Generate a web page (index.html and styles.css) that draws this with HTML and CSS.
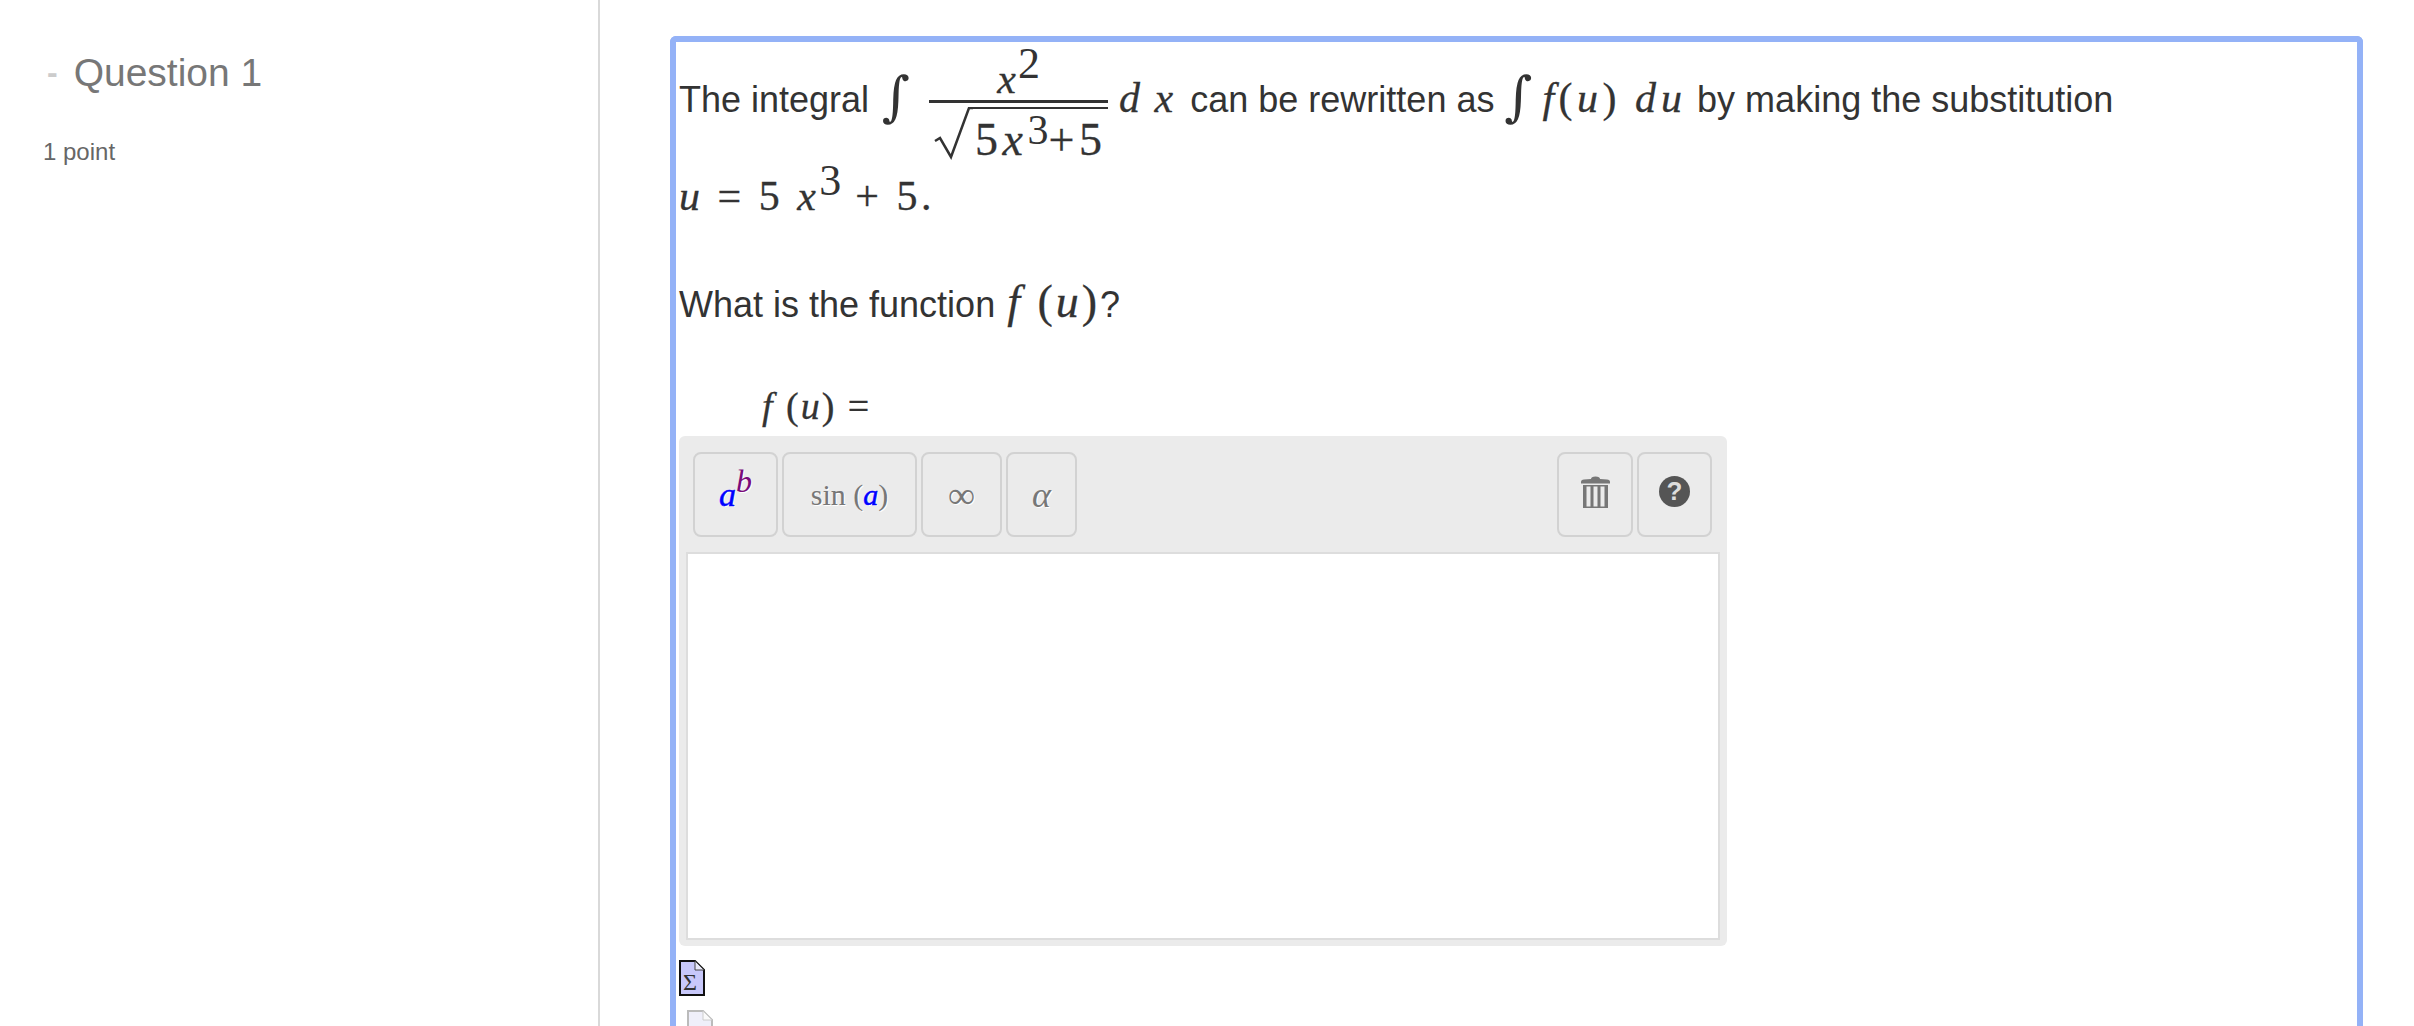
FILE: index.html
```html
<!DOCTYPE html>
<html lang="en">
<head>
    <meta charset="UTF-8">
    <title>Question 1</title>
    <link rel="stylesheet" href="styles.css">
</head>
<body>
    <div class="page">
        <!-- Left column -->
        <aside class="sidebar">
            <h2 class="q-title"><span class="q-dash">-</span>Question 1</h2>
            <div class="q-points">1 point</div>
        </aside>

        <!-- Question -->
        <main class="main">
            <div class="q-box">
                <p class="line-one">
                    The integral<span class="int">∫</span><span class="frac">
                        <span class="frac-top"><i class="math">x</i><sup class="sup-num">2</sup></span>
                        <span class="frac-bot">
                            <svg class="radical" width="39" height="54" viewBox="0 0 39 54"><path d="M1 34 L6 31 L17 50 L35 1 H39" fill="none" stroke="#333" stroke-width="2.500"/></svg>
                            <span class="radicand"><span class="math">5<i>x</i></span><sup class="sup-small">3</sup><span class="math">+5</span></span>
                        </span>
                    </span><i class="math dx">d x</i><span class="after-dx">can be rewritten as</span><span class="int int-two">∫</span><span class="math fu"><i>f</i>(<i>u</i>)</span><i class="math du">du</i><span class="after-du">by making the substitution</span>
                </p>
                <p class="line-two"><span class="math"><i>u</i> = 5 <i>x</i></span><sup class="sup-num">3</sup><span class="math"> + 5.</span></p>
                <p class="line-three">What is the function<span class="math fn-call"><i>f</i> (<i>u</i>)</span>?</p>
                <div class="answer-label math"><i>f</i> (<i>u</i>) =</div>

                <div class="editor">
                    <div class="toolbar">
                        <button class="tool tool-pow"><span><i class="var-a">a</i><sup class="var-b">b</sup></span></button>
                        <button class="tool tool-sin"><span>sin (<i class="var-a">a</i>)</span></button>
                        <button class="tool tool-inf">∞</button>
                        <button class="tool tool-alpha">α</button>
                        <div class="tool-gap"></div>
                        <button class="tool tool-icon">
                            <svg class="icon-up" width="29" height="32" viewBox="0 0 29 32">
                                <path d="M0 6 Q0 3.500 3 3.500 L10 3 Q10 0.500 14.500 0.500 Q19 0.500 19 3 L26 3.500 Q29 3.500 29 6 L29 7.500 L0 7.500 Z" fill="#777"/>
                                <path d="M2 9 H27 V32 H2 Z M5.500 10.500 V30.500 H9.500 V10.500 Z M12.500 10.500 V30.500 H16.500 V10.500 Z M19.500 10.500 V30.500 H23.500 V10.500 Z" fill="#777" fill-rule="evenodd"/>
                            </svg>
                        </button>
                        <button class="tool tool-help">
                            <span class="help icon-up">?</span>
                        </button>
                    </div>
                    <div class="input-area"></div>
                </div>

                <div class="file-icon">
                    <svg width="26" height="36" viewBox="0 0 26 36">
                        <path d="M1 1 H16 L25 10 V35 H1 Z" fill="#c8c8fa" stroke="#111" stroke-width="2"/>
                        <path d="M16 1 V10 H25 Z" fill="#e8e8f8" stroke="#444" stroke-width="1"/>
                        <text x="11" y="30" text-anchor="middle" class="sigma">Σ</text>
                    </svg>
                </div>
                <div class="file-icon file-icon-off">
                    <svg width="26" height="36" viewBox="0 0 26 36">
                        <path d="M1 1 H16 L25 10 V35 H1 Z" fill="#efeffa" stroke="#bbb" stroke-width="2"/>
                        <path d="M16 1 V10 H25 Z" fill="#fafafa" stroke="#ccc" stroke-width="1"/>
                    </svg>
                </div>
            </div>
        </main>
    </div>
</body>
</html>
```

FILE: styles.css
```css
html, body {
    margin: 0;
    height: 100%;
    overflow: hidden;
    background: #fff;
}

body {
    font-family: "Liberation Sans", Arial, sans-serif;
    color: #333;
}

.page {
    display: flex;
    height: 1026px;
    overflow: hidden;
}

.sidebar {
    width: 600px;
    flex: none;
    box-sizing: border-box;
    border-right: 2px solid #d9d9d9;
    padding: 48px 0 0 43px;
}

.q-title {
    margin: 0;
    font-size: 39px;
    font-weight: normal;
    line-height: 48px;
    color: #777;
}

.q-dash {
    color: #ccc;
    font-size: 32px;
    font-weight: bold;
    vertical-align: 3px;
    margin: 0 16px 0 4px;
}

.q-points {
    margin-top: 40px;
    font-size: 24px;
    line-height: 30px;
    color: #666;
}

.main {
    flex: 1;
    padding: 36px 51px 0 70px;
}

.q-box {
    border: 6px solid #94b2f7;
    border-bottom: none;
    border-radius: 6px 6px 0 0;
    padding-left: 3px;
    height: 1200px;
    font-size: 36px;
}

.q-box p {
    margin: 0;
}

.math {
    font-family: "Liberation Serif", "DejaVu Serif", serif;
    font-size: 42px;
    letter-spacing: 2px;
    -webkit-text-stroke: 0.3px #333;
}

.line-one {
    height: 126px;
    white-space: nowrap;
}

.int {
    display: inline-block;
    width: 27px;
    margin: 0 20px 0 13px;
    font-family: "DejaVu Serif", serif;
    font-size: 54px;
    line-height: 0;
    vertical-align: -3px;
}

.frac {
    display: inline-flex;
    flex-direction: column;
    width: 179px;
    vertical-align: 19px;
    line-height: 1;
}

.frac-top {
    height: 58px;
    line-height: 74px;
    text-align: center;
    border-bottom: 3px solid #333;
}

.frac-bot {
    display: flex;
    justify-content: flex-end;
    margin-top: 4px;
}

.radical {
    flex: none;
}

.radicand {
    width: 135px;
    box-sizing: border-box;
    border-top: 2.5px solid #333;
    height: 52px;
    line-height: 62px;
    white-space: nowrap;
    padding-left: 2px;
}

.radicand .math {
    font-size: 46px;
    letter-spacing: 4.500px;
}

.sup-num {
    font-family: "Liberation Serif", serif;
    font-size: 44px;
    line-height: 0;
    vertical-align: 15px;
}

.sup-small {
    font-family: "Liberation Serif", serif;
    font-size: 42px;
    line-height: 0;
    vertical-align: 11px;
}

.dx {
    margin-left: 11px;
}

.after-dx {
    margin-left: 15px;
}

.int-two {
    margin: 0 11px 0 10px;
}

.fu {
    letter-spacing: 4.500px;
}

.du {
    margin-left: 14px;
    letter-spacing: 5px;
}

.after-du {
    margin-left: 10px;
}

.line-two {
    height: 56px;
    line-height: 56px;
}

.line-two .math {
    letter-spacing: 3.500px;
    font-size: 42px;
}

.line-three {
    margin-top: 48px !important;
    line-height: 60px;
}

.fn-call {
    margin-left: 12px;
    font-size: 46px;
    letter-spacing: 3px;
}

.answer-label {
    margin: 46px 0 0 83px;
    font-size: 38px;
    line-height: 50px;
    height: 55px;
}

.editor {
    width: 1048px;
    height: 510px;
    background: #ebebeb;
    border-radius: 6px;
    padding: 0 7px 6px;
    box-sizing: border-box;
    display: flex;
    flex-direction: column;
}

.toolbar {
    display: flex;
    gap: 4px;
    padding: 16px 8px 15px 7px;
}

.tool {
    height: 85px;
    background: #ebebeb;
    border: 2px solid #d2d2d2;
    border-radius: 8px;
    padding: 0;
    display: flex;
    align-items: center;
    justify-content: center;
    font-family: "Liberation Serif", serif;
    color: #777;
    text-shadow: 1px 1px 0 #fff;
}

.tool-pow {
    width: 85px;
    font-size: 34px;
}

.tool-sin {
    width: 135px;
    font-size: 30px;
}

.tool-inf {
    width: 81px;
    font-size: 38px;
}

.tool-alpha {
    width: 71px;
    font-size: 36px;
    font-style: italic;
}

.tool-gap {
    flex: 1;
}

.tool-icon {
    width: 76px;
}

.tool-help {
    width: 75px;
}

.icon-up {
    margin-top: -6px;
}

.var-a {
    color: #00f;
    -webkit-text-stroke: 0.5px #00f;
}

.var-b {
    color: #7a0a7a;
    font-style: italic;
    font-size: 32px;
    line-height: 0;
    vertical-align: 14px;
}

.help {
    width: 31px;
    height: 31px;
    border-radius: 50%;
    background: #555;
    color: #ddd;
    font-family: "Liberation Sans", sans-serif;
    font-weight: bold;
    font-size: 26px;
    line-height: 31px;
    text-shadow: none;
    text-align: center;
}

.input-area {
    flex: 1;
    background: #fff;
    border: 2px solid #ddd;
}

.file-icon {
    margin-top: 14px;
    height: 36px;
}

.file-icon-off {
    margin-left: 8px;
}

.sigma {
    font-family: "Liberation Serif", serif;
    font-size: 24px;
    fill: #333;
}
```
